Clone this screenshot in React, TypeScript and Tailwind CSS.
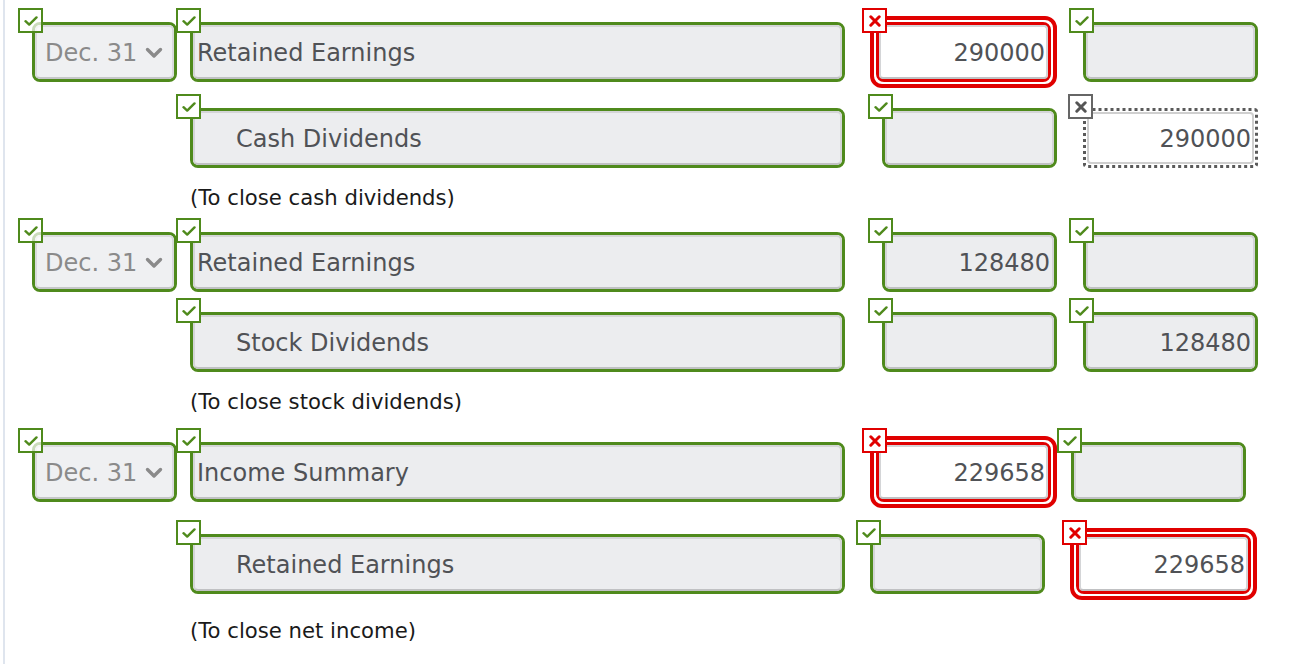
import React from "react";

type Status = "ok" | "bad" | "neutral";

function CheckIcon() {
  return (
    <svg width="14" height="12" viewBox="0 0 14 12" fill="none">
      <path d="M1.5 6.2 L5.2 9.6 L12.5 2.4" stroke="#4f8a1c" strokeWidth="2.4" strokeLinecap="round" strokeLinejoin="round" />
    </svg>
  );
}

function XIcon({ color }: { color: string }) {
  return (
    <svg width="12" height="12" viewBox="0 0 12 12" fill="none">
      <path d="M1.8 1.8 L10.2 10.2 M10.2 1.8 L1.8 10.2" stroke={color} strokeWidth="3" strokeLinecap="round" />
    </svg>
  );
}

function Badge({ status, pos, faded }: { status: Status; pos: string; faded?: boolean }) {
  if (status === "ok") {
    return (
      <div className={`absolute z-10 flex h-[25px] w-[25px] items-center justify-center border-2 border-[#4f8a1c] ${faded ? "bg-white/70" : "bg-white"} ${pos}`}>
        <CheckIcon />
      </div>
    );
  }
  if (status === "bad") {
    return (
      <div className={`absolute z-10 flex h-[25px] w-[25px] items-center justify-center border-2 border-[#e00000] bg-white ${pos}`}>
        <XIcon color="#e00000" />
      </div>
    );
  }
  return (
    <div className={`absolute z-10 flex h-[25px] w-[25px] items-center justify-center border-2 border-[#666666] bg-white ${pos}`}>
      <XIcon color="#555555" />
    </div>
  );
}

const font = "font-['DejaVu_Sans',Verdana,sans-serif]";

function DateBox() {
  return (
    <div className="relative h-[60px] w-[145px] shrink-0 rounded-[8px] border-[3px] border-[#4f8a1c]">
      <Badge status="ok" pos="-left-[17px] -top-[17px]" faded />
      <div className={`flex h-full items-center justify-between rounded-[5px] border-2 border-[#d9dadc] border-b-[#c6c7c9] bg-[#eff0f2] pl-[8px] pr-[9px] pt-[1px] text-[24px] text-[#8a8a8a] ${font}`}>
        <span>Dec. 31</span>
        <svg width="18" height="12" viewBox="0 0 18 12" fill="none">
          <path d="M2.5 2.5 L9 9 L15.5 2.5" stroke="#8a8a8a" strokeWidth="3.4" strokeLinecap="round" strokeLinejoin="round" />
        </svg>
      </div>
    </div>
  );
}

function Spacer() {
  return <div className="h-[60px] w-[145px] shrink-0" />;
}

function AccountBox({ text, indent }: { text: string; indent?: boolean }) {
  return (
    <div className="relative ml-[13px] h-[60px] w-[655px] shrink-0 rounded-[8px] border-[3px] border-[#4f8a1c]">
      <Badge status="ok" pos="-left-[17px] -top-[17px]" />
      <div className={`flex h-full items-center rounded-[5px] border-2 border-[#d4d5d7] border-b-[#c0c1c3] bg-[#ecedef] pt-[1px] ${indent ? "pl-[41px]" : "pl-[2px]"} text-[24px] text-[#505256] ${font}`}>
        {text}
      </div>
    </div>
  );
}

function GreenAmount({ value, ml }: { value?: string; ml: string }) {
  return (
    <div className={`relative h-[60px] w-[175px] shrink-0 rounded-[8px] border-[3px] border-[#4f8a1c] ${ml}`}>
      <Badge status="ok" pos="-left-[17px] -top-[17px]" />
      <div className={`flex h-full items-center justify-end rounded-[5px] border-2 border-[#d4d5d7] border-b-[#c0c1c3] bg-[#ecedef] pr-[2px] pt-[1px] text-[24px] text-[#505256] ${font}`}>
        {value}
      </div>
    </div>
  );
}

function RedAmount({ value, ml }: { value: string; ml: string }) {
  return (
    <div className={`relative h-[72px] w-[187px] shrink-0 rounded-[12px] border-4 border-[#e00000] bg-white p-[2px] ${ml}`}>
      <Badge status="bad" pos="-left-[12px] -top-[12px]" />
      <div className="h-full rounded-[8px] border-[3px] border-[#e00000]">
        <div className={`flex h-full items-center justify-end rounded-[4px] border-2 border-[#d4d5d7] border-b-[#c0c1c3] bg-white pr-[1px] pt-[1px] text-[24px] text-[#505256] ${font}`}>
          {value}
        </div>
      </div>
    </div>
  );
}

function DottedAmount({ value, ml }: { value: string; ml: string }) {
  return (
    <div className={`relative h-[60px] w-[175px] shrink-0 p-[4px] ${ml}`}>
      <svg className="pointer-events-none absolute inset-0" width="175" height="60" viewBox="0 0 175 60" fill="none">
        <rect x="1.5" y="1.5" width="172" height="57" rx="2" stroke="#5a5a5a" strokeWidth="3" strokeDasharray="3 3" />
      </svg>
      <Badge status="neutral" pos="-left-[15px] -top-[14px]" />
      <div className={`flex h-full items-center justify-end rounded-[4px] border-2 border-[#cfcfcf] bg-white pr-[1px] pt-[1px] text-[24px] text-[#505256] ${font}`}>
        {value}
      </div>
    </div>
  );
}

function Note({ text, mt }: { text: string; mt: string }) {
  return (
    <div className={`h-[30px] pl-[185px] text-[21.2px] leading-[30px] text-[#1a1a1a] ${font} ${mt}`}>{text}</div>
  );
}

export default function App() {
  return (
    <div className="min-h-[664px] w-[1306px] overflow-hidden bg-white pl-[3px]">
      <div className="min-h-[664px] border-l-2 border-[#dfe5ee] pt-[22px]">
        {/* Row 1 */}
        <div className="flex h-[60px] items-center pl-[27px]">
          <DateBox />
          <AccountBox text="Retained Earnings" />
          <RedAmount value="290000" ml="ml-[25px]" />
          <GreenAmount ml="ml-[26px]" />
        </div>
        {/* Row 2 */}
        <div className="mt-[26px] flex h-[60px] items-center pl-[27px]">
          <Spacer />
          <AccountBox text="Cash Dividends" indent />
          <GreenAmount ml="ml-[37px]" />
          <DottedAmount value="290000" ml="ml-[26px]" />
        </div>
        <Note text="(To close cash dividends)" mt="mt-[15px]" />
        {/* Row 3 */}
        <div className="mt-[19px] flex h-[60px] items-center pl-[27px]">
          <DateBox />
          <AccountBox text="Retained Earnings" />
          <GreenAmount value="128480" ml="ml-[37px]" />
          <GreenAmount ml="ml-[26px]" />
        </div>
        {/* Row 4 */}
        <div className="mt-[20px] flex h-[60px] items-center pl-[27px]">
          <Spacer />
          <AccountBox text="Stock Dividends" indent />
          <GreenAmount ml="ml-[37px]" />
          <GreenAmount value="128480" ml="ml-[26px]" />
        </div>
        <Note text="(To close stock dividends)" mt="mt-[15px]" />
        {/* Row 5 */}
        <div className="mt-[25px] flex h-[60px] items-center pl-[27px]">
          <DateBox />
          <AccountBox text="Income Summary" />
          <RedAmount value="229658" ml="ml-[25px]" />
          <GreenAmount ml="ml-[14px]" />
        </div>
        {/* Row 6 */}
        <div className="mt-[32px] flex h-[60px] items-center pl-[27px]">
          <Spacer />
          <AccountBox text="Retained Earnings" indent />
          <GreenAmount ml="ml-[25px]" />
          <RedAmount value="229658" ml="ml-[25px]" />
        </div>
        <Note text="(To close net income)" mt="mt-[22px]" />
      </div>
    </div>
  );
}
